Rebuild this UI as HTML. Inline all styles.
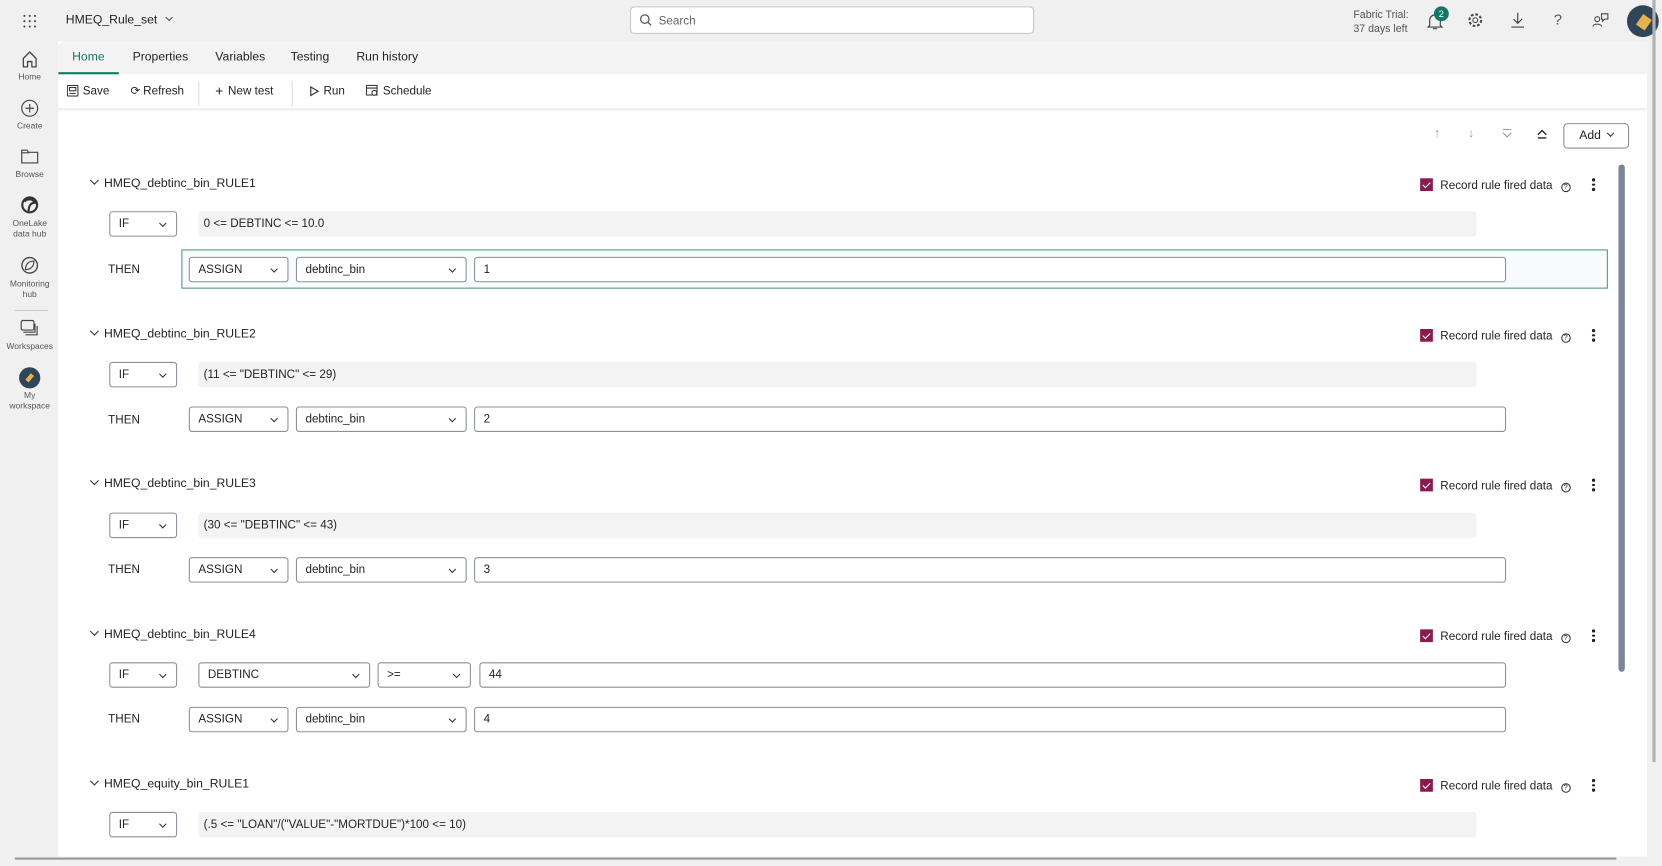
<!DOCTYPE html>
<html><head><meta charset="utf-8"><style>
*{box-sizing:border-box;margin:0;padding:0}
html,body{width:1662px;height:866px;overflow:hidden;background:#f0f0f0}
#w{position:absolute;left:0;top:0;width:1567px;height:816px;transform:scale(1.0606,1.0613);transform-origin:0 0;font-family:"Liberation Sans",sans-serif;color:#242424;font-size:11.5px}
.a{position:absolute}
.t{position:absolute;white-space:nowrap}
.sel{position:absolute;height:24px;border:1px solid #8a8f98;border-radius:3px;background:#fff;padding:0 8px;line-height:23px;font-size:11px}
.sel::after{content:"";position:absolute;right:10px;top:8px;width:4px;height:4px;border-right:1.2px solid #333;border-bottom:1.2px solid #333;transform:rotate(45deg)}
.inp{position:absolute;height:24px;border:1px solid #8a8f98;border-radius:3px;background:#fff;padding:0 8px;line-height:23px;font-size:11px}
.cond{position:absolute;left:187px;width:1205px;height:24px;background:#f3f3f4;border-radius:3px;padding:0 5px;line-height:25px;font-size:11px}
.hdr{position:absolute;left:84px;font-size:11.5px}
.hdr::before{content:"";display:inline-block;width:5px;height:5px;border-right:1.2px solid #333;border-bottom:1.2px solid #333;transform:rotate(45deg);margin:0 6px 3px 2px}
.rec{position:absolute;left:1339px;font-size:11px;white-space:nowrap}
.cb{display:inline-block;width:12px;height:12px;background:#8b1a4f;vertical-align:-2px;margin-right:7px;position:relative}
.cb::after{content:"";position:absolute;left:4px;top:2px;width:3px;height:6px;border-right:1.3px solid #fff;border-bottom:1.3px solid #fff;transform:rotate(45deg)}
.q{display:inline-block;width:9px;height:9px;border:1px solid #333;border-radius:50%;font-size:7px;line-height:7px;text-align:center;margin-left:8px;vertical-align:0}
.keb{position:absolute;left:1501px;width:3px}
.keb i{display:block;width:2.5px;height:2.5px;background:#222;border-radius:50%;margin-bottom:2px}
.rl{position:absolute;left:28px;transform:translateX(-50%);text-align:center;font-size:8px;color:#555;line-height:10px;white-space:nowrap}
.th{position:absolute;left:102px;font-size:11px}
</style></head><body><div id="w">
<svg class="a" style="left:21px;top:13px" width="14" height="14"><g fill="#444"><circle cx="2" cy="2" r="1"/><circle cx="7" cy="2" r="1"/><circle cx="12" cy="2" r="1"/><circle cx="2" cy="7" r="1"/><circle cx="7" cy="7" r="1"/><circle cx="12" cy="7" r="1"/><circle cx="2" cy="12" r="1"/><circle cx="7" cy="12" r="1"/><circle cx="12" cy="12" r="1"/></g></svg>
<div class="t" style="left:62px;top:13px;font-size:11.5px">HMEQ_Rule_set <span style="display:inline-block;width:5px;height:5px;border-right:1px solid #555;border-bottom:1px solid #555;transform:rotate(45deg);margin:0 0 3px 6px"></span></div>
<div class="a" style="left:594px;top:6px;width:381px;height:26px;background:#fff;border:1px solid #c8c8c8;border-radius:4px"></div>
<svg class="a" style="left:603px;top:13px" width="12" height="12"><circle cx="5" cy="5" r="4" fill="none" stroke="#555" stroke-width="1.2"/><line x1="8" y1="8" x2="11" y2="11" stroke="#555" stroke-width="1.2"/></svg>
<div class="t" style="left:621px;top:14px;color:#666;font-size:11px">Search</div>
<div class="t" style="left:1276px;top:8px;font-size:10px;color:#555;line-height:13px">Fabric Trial:<br>37 days left</div>
<svg class="a" style="left:1344px;top:11px" width="18" height="18"><path d="M4 13V8a5 5 0 0 1 10 0v5l1.5 1.5h-13z M7 16h4" fill="none" stroke="#444" stroke-width="1.1"/></svg>
<div class="a" style="left:1352px;top:6px;width:14px;height:14px;border-radius:50%;background:#117865;color:#fff;font-size:9px;text-align:center;line-height:14px">2</div>
<svg class="a" style="left:1383px;top:11px" width="16" height="16"><circle cx="8" cy="8" r="2.3" fill="none" stroke="#444"/><circle cx="8" cy="8" r="5.5" fill="none" stroke="#444" stroke-dasharray="2.5 1.8" stroke-width="2"/></svg>
<svg class="a" style="left:1424px;top:11px" width="14" height="16"><path d="M7 1v10M3 7l4 4 4-4M1 14.5h12" fill="none" stroke="#444" stroke-width="1.1"/></svg>
<div class="t" style="left:1465px;top:10px;font-size:14px;color:#555">?</div>
<svg class="a" style="left:1501px;top:11px" width="16" height="16"><circle cx="5" cy="7" r="2.3" fill="none" stroke="#444"/><path d="M1 14c0-3 8-3 8 0M9 2h6v5h-3l-2 2V7h-1z" fill="none" stroke="#444"/></svg>
<div class="a" style="left:1534px;top:5px;width:30px;height:30px;border-radius:50%;background:#2e4657;overflow:hidden"><div class="a" style="left:11px;top:10px;width:10px;height:12px;background:#e7b24e;transform:rotate(35deg)"></div></div>
<svg class="a" style="left:20px;top:47px" width="16" height="17"><path d="M2 8l6-6 6 6v8h-4v-5H6v5H2z" fill="none" stroke="#444" stroke-width="1.2" stroke-linejoin="round"/></svg>
<div class="rl" style="top:68px">Home</div>
<svg class="a" style="left:19px;top:93px" width="18" height="18"><circle cx="9" cy="9" r="7.5" fill="none" stroke="#444" stroke-width="1.1"/><path d="M9 5v8M5 9h8" stroke="#444" stroke-width="1.1"/></svg>
<div class="rl" style="top:114px">Create</div>
<svg class="a" style="left:19px;top:139px" width="18" height="17"><path d="M1.5 2.5h5l1.5 2h8.5v10h-15z M1.5 5h7" fill="none" stroke="#444" stroke-width="1.1"/></svg>
<div class="rl" style="top:160px">Browse</div>
<svg class="a" style="left:19px;top:184px" width="18" height="18"><circle cx="9" cy="9" r="7" fill="none" stroke="#333" stroke-width="2"/><path d="M4 6a6 6 0 0 1 10 1c-4 0-6 3-6 8" fill="none" stroke="#333" stroke-width="2"/></svg>
<div class="rl" style="top:206px">OneLake<br>data hub</div>
<svg class="a" style="left:19px;top:241px" width="18" height="18"><circle cx="9" cy="9" r="7.3" fill="none" stroke="#444" stroke-width="1.3"/><path d="M5 13c0-5 3-8 8-8c0 5-3 8-8 8z" fill="none" stroke="#444" stroke-width="1.1"/></svg>
<div class="rl" style="top:263px">Monitoring<br>hub</div>
<div class="a" style="left:14px;top:292px;width:31px;height:1px;background:#ccc"></div>
<svg class="a" style="left:19px;top:301px" width="18" height="16"><rect x="1" y="1" width="12" height="9" rx="1.5" fill="none" stroke="#444" stroke-width="1.1"/><path d="M3 12h11V4M5 14.5h11V6" fill="none" stroke="#444" stroke-width="1.1"/></svg>
<div class="rl" style="top:322px">Workspaces</div>
<div class="a" style="left:18px;top:346px;width:20px;height:20px;border-radius:50%;background:#2e4657"><div class="a" style="left:8px;top:6px;width:4px;height:8px;background:#e7b24e;transform:rotate(40deg)"></div></div>
<div class="rl" style="top:368px">My<br>workspace</div>
<div class="a" style="left:55px;top:39px;width:1498px;height:768px;background:#fff"></div>
<div class="a" style="left:55px;top:39px;width:1498px;height:31px;background:#f3f3f3;border-radius:6px 0 0 0"></div>
<div class="a" style="left:55px;top:102px;width:1498px;height:3px;background:linear-gradient(#e8e8e8,#fff)"></div>
<div class="t" style="left:68px;top:48px;color:#117865">Home</div>
<div class="a" style="left:55px;top:68px;width:57px;height:2px;background:#117865"></div>
<div class="t" style="left:125px;top:48px">Properties</div>
<div class="t" style="left:203px;top:48px">Variables</div>
<div class="t" style="left:274px;top:48px">Testing</div>
<div class="t" style="left:336px;top:48px">Run history</div>
<svg class="a" style="left:63px;top:80px" width="11" height="11"><rect x=".5" y=".5" width="10" height="10" rx="1" fill="none" stroke="#333"/><rect x="2.5" y="2.5" width="6" height="3" fill="none" stroke="#333"/><path d="M2.5 8h6" stroke="#333"/></svg>
<div class="t" style="left:78px;top:80px;font-size:11px">Save</div>
<div class="t" style="left:123px;top:79px;font-size:11px">⟳</div>
<div class="t" style="left:135px;top:80px;font-size:11px">Refresh</div>
<div class="a" style="left:187px;top:76px;width:1px;height:24px;background:#e0e0e0"></div>
<div class="t" style="left:203px;top:78px;font-size:13px">+</div>
<div class="t" style="left:215px;top:80px;font-size:11px">New test</div>
<div class="a" style="left:275px;top:76px;width:1px;height:24px;background:#e0e0e0"></div>
<svg class="a" style="left:292px;top:81px" width="9" height="10"><path d="M1 1l7 4-7 4z" fill="none" stroke="#333" stroke-width="1.1"/></svg>
<div class="t" style="left:305px;top:80px;font-size:11px">Run</div>
<svg class="a" style="left:345px;top:79px" width="12" height="12"><rect x=".5" y="1.5" width="10" height="9" fill="none" stroke="#333"/><path d="M.5 4h10" stroke="#333"/><circle cx="8" cy="8.5" r="2.3" fill="#fff" stroke="#333"/></svg>
<div class="t" style="left:361px;top:80px;font-size:11px">Schedule</div>
<div class="t" style="left:1352px;top:118px;color:#999;font-size:12px">↑</div>
<div class="t" style="left:1384px;top:118px;color:#999;font-size:12px">↓</div>
<svg class="a" style="left:1416px;top:121px" width="10" height="10"><path d="M1 1h8M1 4l4 4 4-4" fill="none" stroke="#999"/></svg>
<svg class="a" style="left:1449px;top:121px" width="10" height="10"><path d="M1 9h8M1 6l4-4 4 4" fill="none" stroke="#222" stroke-width="1.3"/></svg>
<div class="a" style="left:1474px;top:116px;width:62px;height:24px;border:1px solid #8a8f98;border-radius:4px;font-size:11.5px;line-height:22px;padding-left:14px">Add <span style="display:inline-block;width:5px;height:5px;border-right:1px solid #333;border-bottom:1px solid #333;transform:rotate(45deg);margin:0 0 3px 3px"></span></div>
<div class="a" style="left:1526px;top:155px;width:6px;height:478px;background:#7a8699;border-radius:3px"></div>
<div class="a" style="left:1558px;top:0;width:3px;height:718px;background:#b0b0b0"></div>
<div class="a" style="left:14px;top:808px;width:1510px;height:2px;background:#999"></div>

<div class="hdr" style="top:167px">HMEQ_debtinc_bin_RULE1</div>
<div class="rec" style="top:168px"><span class="cb"></span>Record rule fired data<span class="q">?</span></div>
<div class="keb" style="top:168px"><i></i><i></i><i></i></div>
<div class="sel" style="left:103px;top:199px;width:64px">IF</div>
<div class="cond" style="top:199px">0 &lt;= DEBTINC &lt;= 10.0</div>
<div class="a" style="left:171px;top:235px;width:1345px;height:37px;border:1px solid #4a9a87;background:#f8fafb"></div>
<div class="th" style="top:248px">THEN</div>
<div class="sel" style="left:178px;top:242px;width:94px">ASSIGN</div>
<div class="sel" style="left:279px;top:242px;width:161px">debtinc_bin</div>
<div class="inp" style="left:447px;top:242px;width:973px">1</div>

<div class="hdr" style="top:309px">HMEQ_debtinc_bin_RULE2</div>
<div class="rec" style="top:310px"><span class="cb"></span>Record rule fired data<span class="q">?</span></div>
<div class="keb" style="top:310px"><i></i><i></i><i></i></div>
<div class="sel" style="left:103px;top:341px;width:64px">IF</div>
<div class="cond" style="top:341px">(11 &lt;= "DEBTINC" &lt;= 29)</div>
<div class="th" style="top:390px">THEN</div>
<div class="sel" style="left:178px;top:383px;width:94px">ASSIGN</div>
<div class="sel" style="left:279px;top:383px;width:161px">debtinc_bin</div>
<div class="inp" style="left:447px;top:383px;width:973px">2</div>

<div class="hdr" style="top:450px">HMEQ_debtinc_bin_RULE3</div>
<div class="rec" style="top:451px"><span class="cb"></span>Record rule fired data<span class="q">?</span></div>
<div class="keb" style="top:451px"><i></i><i></i><i></i></div>
<div class="sel" style="left:103px;top:483px;width:64px">IF</div>
<div class="cond" style="top:483px">(30 &lt;= "DEBTINC" &lt;= 43)</div>
<div class="th" style="top:531px">THEN</div>
<div class="sel" style="left:178px;top:525px;width:94px">ASSIGN</div>
<div class="sel" style="left:279px;top:525px;width:161px">debtinc_bin</div>
<div class="inp" style="left:447px;top:525px;width:973px">3</div>

<div class="hdr" style="top:592px">HMEQ_debtinc_bin_RULE4</div>
<div class="rec" style="top:593px"><span class="cb"></span>Record rule fired data<span class="q">?</span></div>
<div class="keb" style="top:593px"><i></i><i></i><i></i></div>
<div class="sel" style="left:103px;top:624px;width:64px">IF</div>
<div class="sel" style="left:187px;top:624px;width:162px">DEBTINC</div>
<div class="sel" style="left:356px;top:624px;width:88px">&gt;=</div>
<div class="inp" style="left:452px;top:624px;width:968px">44</div>
<div class="th" style="top:672px">THEN</div>
<div class="sel" style="left:178px;top:666px;width:94px">ASSIGN</div>
<div class="sel" style="left:279px;top:666px;width:161px">debtinc_bin</div>
<div class="inp" style="left:447px;top:666px;width:973px">4</div>

<div class="hdr" style="top:733px">HMEQ_equity_bin_RULE1</div>
<div class="rec" style="top:734px"><span class="cb"></span>Record rule fired data<span class="q">?</span></div>
<div class="keb" style="top:734px"><i></i><i></i><i></i></div>
<div class="sel" style="left:103px;top:765px;width:64px">IF</div>
<div class="cond" style="top:765px">(.5 &lt;= "LOAN"/("VALUE"-"MORTDUE")*100 &lt;= 10)</div>
</div></body></html>
